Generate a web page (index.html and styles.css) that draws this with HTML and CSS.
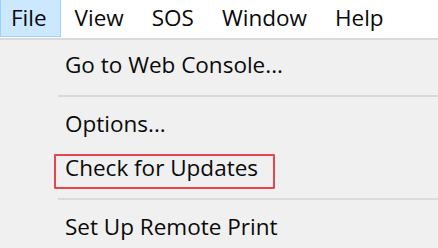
FILE: index.html
```html
<!doctype html>
<html lang="en">
<head>
    <meta charset="UTF-8">
    <title>File Menu</title>
    <link rel="stylesheet" href="styles.css">
</head>
<body>
<div class="menubar">
    <div class="menubar-item active">File</div>
    <div class="menubar-item">View</div>
    <div class="menubar-item">SOS</div>
    <div class="menubar-item">Window</div>
    <div class="menubar-item">Help</div>
</div>
<div class="dropdown">
    <div class="menu-item">Go to Web Console...</div>
    <div class="separator"></div>
    <div class="menu-item">Options...</div>
    <div class="menu-item marked">
        Check for Updates
        <span class="highlight-box"></span>
    </div>
    <div class="separator"></div>
    <div class="menu-item">Set Up Remote Print</div>
</div>
</body>
</html>
```

FILE: styles.css
```css
body {
    margin: 0;
    font-family: "Open Sans", "Noto Sans", sans-serif;
    font-size: 22.5px;
    color: #0a0a0a;
    background-color: #f0f0f0;
    overflow: hidden;
}
.menubar {
    display: flex;
    height: 38px;
    background-color: #fff;
    border-bottom: 2px solid #dadada;
}
.menubar-item {
    display: flex;
    align-items: center;
    padding: 0 13px 1px;
    height: 35px;
    border: 1px solid transparent;
    border-top: 0;
}
.menubar-item.active {
    padding-left: 10px;
    background-color: #cce8ff;
    border-color: #99d1ff;
}
.dropdown {
    padding-top: 4px;
}
.menu-item {
    height: 44px;
    line-height: 42px;
    padding-left: 65px;
    position: relative;
}
.separator {
    height: 15px;
    margin-left: 58px;
    display: flex;
    align-items: center;
}
.separator::after {
    content: "";
    display: block;
    width: 100%;
    height: 2px;
    background-color: #dadada;
}
.highlight-box {
    position: absolute;
    left: 54px;
    top: 7px;
    width: 217px;
    height: 31px;
    border: 2px solid #e5474f;
    border-radius: 1px;
}
```
